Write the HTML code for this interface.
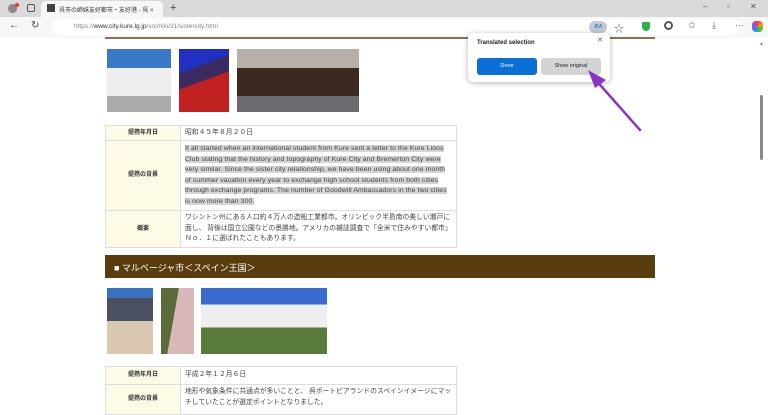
<!DOCTYPE html>
<html><head><meta charset="utf-8"><style>
*{margin:0;padding:0;box-sizing:border-box}
body{width:768px;height:412px;overflow:hidden;background:#fff;font-family:"Liberation Sans","Noto Sans CJK JP",sans-serif;position:relative}
.abs{position:absolute}
.tabbar{left:0;top:0;width:768px;height:17px;background:#d9d9d9}
.tab{left:41px;top:1px;width:122px;height:16px;background:#f7f7f7;border-radius:5px 5px 0 0;font-size:6px;color:#333;padding:4px 0 0 18px}
.addr{left:0;top:17px;width:768px;height:21px;background:#f7f7f7}
.url{left:52px;top:19px;width:688px;height:16px;background:#fff;border-radius:8px;font-size:6.5px;color:#888;padding:4px 0 0 22px}
.url b{color:#333;font-weight:normal}
.td{border:1px solid #ddd;font-size:6.8px;color:#444;line-height:10.5px}
.lab{background:#fdfbe6;text-align:center;font-weight:bold;color:#333;font-size:6px}
.sel{background:#d4d4d4}
</style></head><body>
<div class="abs tabbar"></div>
<div class="abs" style="left:8px;top:4px;width:9px;height:9px;border-radius:50%;background:#888"></div>
<div class="abs" style="left:15px;top:3px;width:4px;height:4px;border-radius:50%;background:#e33"></div>
<div class="abs" style="left:27px;top:4px;width:8px;height:8px;border:1.5px solid #555;border-radius:2px"></div>
<div class="abs tab">呉市の姉妹友好都市・友好港 - 呉 ×</div>
<div class="abs" style="left:47px;top:4px;width:8px;height:8px;background:#444"></div>
<div class="abs" style="left:170px;top:2px;font-size:11px;color:#444">+</div>
<div class="abs" style="left:703px;top:2px;font-size:8px;color:#555">–</div>
<div class="abs" style="left:727px;top:2px;font-size:8px;color:#555">▫</div>
<div class="abs" style="left:750px;top:2px;font-size:8px;color:#555">✕</div>
<div class="abs addr"></div>
<div class="abs" style="left:9px;top:20px;font-size:10px;color:#444">←</div>
<div class="abs" style="left:31px;top:20px;font-size:10px;color:#444">↻</div>
<div class="abs url">https://<b>www.city.kure.lg.jp</b>/soshiki/31/sistercity.html</div>
<div class="abs" style="left:589px;top:21px;width:18px;height:12px;border-radius:6px;background:#c4cbd6;font-size:5px;color:#1a5fb4;text-align:center;line-height:12px">あA</div>
<div class="abs" style="left:614px;top:20px;font-size:10px;color:#666">☆</div>
<div class="abs" style="left:642px;top:22px;width:8px;height:9px;background:#2bb34a;border-radius:1px 1px 4px 4px"></div>
<div class="abs" style="left:664px;top:21px;width:9px;height:9px;border:2px solid #555;border-radius:50%"></div>
<div class="abs" style="left:688px;top:20px;font-size:9px;color:#666">✩</div>
<div class="abs" style="left:712px;top:20px;font-size:9px;color:#666">⤓</div>
<div class="abs" style="left:735px;top:20px;font-size:9px;color:#666">···</div>
<div class="abs" style="left:752px;top:21px;width:11px;height:11px;border-radius:4px;background:conic-gradient(#e44,#f90,#3c3,#28f,#a4f,#e44)"></div>

<div class="abs" style="left:105px;top:37px;width:550px;height:2px;background:#8a7055"></div>
<div class="abs" style="left:107px;top:49px;width:64px;height:63px;background:linear-gradient(#3a78c8 0 30%,#eee 30% 75%,#aaa 75%)"></div>
<div class="abs" style="left:179px;top:49px;width:50px;height:63px;background:linear-gradient(160deg,#2030c0 0 30%,#3a2a60 30% 50%,#c02020 50%)"></div>
<div class="abs" style="left:237px;top:49px;width:122px;height:63px;background:linear-gradient(#b8b0a8 0 30%,#3a2a20 30% 75%,#6a6a70 75%)"></div>

<table class="abs" style="left:105px;top:125px;width:352px;border-collapse:collapse">
<tr style="height:15px"><td class="td lab" style="width:75px">提携年月日</td><td class="td" style="padding-left:4px">昭和４５年８月２０日</td></tr>
<tr style="height:70px"><td class="td lab">提携の背景</td><td class="td" style="padding:3px 4px;letter-spacing:0.12px"><span class="sel">It all started when an international student from Kure sent a letter to the Kure Lions Club stating that the history and topography of Kure City and Bremerton City were very similar. Since the sister city relationship, we have been using about one month of summer vacation every year to exchange high school students from both cities through exchange programs. The number of Goodwill Ambassadors in the two cities is now more than 300.</span></td></tr>
<tr style="height:37px"><td class="td lab">概要</td><td class="td" style="padding:2px 4px">ワシントン州にある人口約４万人の造船工業都市。オリンピック半島南の美しい瀬戸に面し、 背後は国立公園などの景勝地。アメリカの雑誌調査で「全米で住みやすい都市」Ｎｏ．１に選ばれたこともあります。</td></tr>
</table>

<div class="abs" style="left:105px;top:255px;width:550px;height:23px;background:#5a3d0c;color:#fff;font-size:9px;padding:6px 0 0 9px">■ マルベージャ市＜スペイン王国＞</div>
<div class="abs" style="left:107px;top:288px;width:46px;height:66px;background:linear-gradient(#3a70c0 0 15%,#4a5060 15% 50%,#d8c8b0 50%)"></div>
<div class="abs" style="left:161px;top:288px;width:33px;height:66px;background:linear-gradient(100deg,#5a6a3a 0 40%,#d8b8b8 40%)"></div>
<div class="abs" style="left:201px;top:288px;width:126px;height:66px;background:linear-gradient(#3a6ad0 0 25%,#eee 25% 60%,#5a7a3a 60%)"></div>

<table class="abs" style="left:105px;top:366px;width:352px;border-collapse:collapse">
<tr style="height:18px"><td class="td lab" style="width:75px">提携年月日</td><td class="td" style="padding-left:4px">平成２年１２月６日</td></tr>
<tr style="height:30px"><td class="td lab">提携の背景</td><td class="td" style="padding:2px 4px;vertical-align:top">地形や気象条件に共通点が多いことと、 呉ポートピアランドのスペインイメージにマッチしていたことが選定ポイントとなりました。</td></tr>
</table>

<div class="abs" style="left:760px;top:95px;width:3px;height:65px;background:#888;border-radius:2px"></div>
<div class="abs" style="left:759px;top:41px;font-size:5px;color:#888">▲</div>

<div class="abs" style="left:468px;top:33px;width:142px;height:49px;background:#fff;border-radius:5px;box-shadow:0 1px 6px rgba(0,0,0,.3)"></div>
<div class="abs" style="left:477px;top:40px;font-size:6px;font-weight:bold;color:#222">Translated selection</div>
<div class="abs" style="left:597px;top:36px;font-size:7px;color:#666">✕</div>
<div class="abs" style="left:477px;top:58px;width:60px;height:17px;background:#0a6fd6;border-radius:3px;color:#fff;font-size:5.5px;text-align:center;line-height:17px">Done</div>
<div class="abs" style="left:541px;top:58px;width:60px;height:17px;background:#d4d4d4;border-radius:3px;color:#222;font-size:5.5px;text-align:center;line-height:17px">Show original</div>
<svg class="abs" style="left:0;top:0" width="768" height="412"><line x1="640" y1="130" x2="594" y2="78" stroke="#8a35c8" stroke-width="2.5" stroke-linecap="round"/><polygon points="588,70 606,80 595,88" fill="#8a35c8"/></svg>
</body></html>
